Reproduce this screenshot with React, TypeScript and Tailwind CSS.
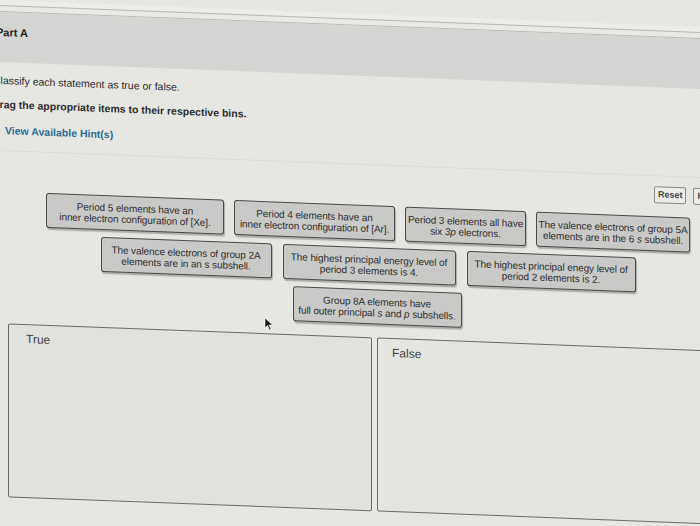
const row1 = [
  { w: "w-[178px]", a: "Period 5 elements have an", b: <>inner electron configuration of [Xe].</> },
  { w: "w-[161px]", a: "Period 4 elements have an", b: <>inner electron configuration of [Ar].</> },
  { w: "w-[121px]", a: "Period 3 elements all have", b: <>six <i>3p</i> electrons.</> },
  { w: "w-[154px]", a: "The valence electrons of group 5A", b: <>elements are in the 6 <i>s</i> subshell.</> },
];

const row2 = [
  { w: "w-[171px]", a: "The valence electrons of group 2A", b: <>elements are in an s subshell.</> },
  { w: "w-[173px]", a: "The highest principal energy level of", b: <>period 3 elements is 4.</> },
  { w: "w-[169px]", a: "The highest principal enegy level of", b: <>period 2 elements is 2.</> },
];

const row3 = [
  { w: "w-[169px]", a: "Group 8A elements have", b: <>full outer principal <i>s</i> and <i>p</i> subshells.</> },
];

type Item = { w: string; a: string; b: React.ReactNode };

function Card({ item }: { item: Item }) {
  return (
    <div
      className={`${item.w} flex h-[35px] shrink-0 flex-col items-center justify-center rounded-[3px] border-[1.5px] border-[#4a4a4a] bg-[#c9c9c7] text-center text-[10px] leading-[11px] tracking-[-0.1px] text-[#2f2f2f] shadow-[1px_2px_1px_rgba(0,0,0,0.25)]`}
    >
      <span className="whitespace-nowrap">{item.a}</span>
      <span className="whitespace-nowrap">{item.b}</span>
    </div>
  );
}

function Row({ items, gap, pad }: { items: Item[]; gap: string; pad?: string }) {
  return (
    <div className={`flex justify-center ${gap} ${pad ?? ""}`}>
      {items.map((it) => (
        <Card key={it.a} item={it} />
      ))}
    </div>
  );
}

export default function App() {
  return (
    <div
      className="relative h-[526px] w-[700px] overflow-hidden bg-[#e6e6e2]"
      style={{ fontFamily: '"Liberation Sans", Arial, sans-serif' }}
    >
      <div className="origin-top-left skew-y-[2.2deg]">
        <div className="h-[5px] bg-[#ececea]" />
        <div className="h-[7px] border-y border-[#b9b9b6] bg-[#e9e9e6]" />
        <div className="h-[50px] bg-[#d5d6d3] pt-[12px]">
          <div className="-ml-[4px] text-[11px] font-bold text-[#222]">Part A</div>
        </div>

        <div className="pt-[11px] text-[10.5px] text-[#2d2d2d]">
          <p className="-ml-[7px]">Classify each statement as true or false.</p>
          <p className="-ml-[8px] mt-[8px] font-bold">Drag the appropriate items to their respective bins.</p>
          <p className="ml-[5px] mt-[10px] font-bold text-[#2e6c94]">View Available Hint(s)</p>
        </div>

        <div className="mt-[12px] h-[2px] border-t border-[#dcdcd8]" />

        <div className="-mr-[21px] flex justify-end gap-[7px] pt-[9px]">
          <div className="flex h-[17px] items-center rounded-[2px] border border-[#8a8a88] bg-[#ececea] px-[3px] text-[9px] font-bold text-[#444]">
            Reset
          </div>
          <div className="flex h-[17px] items-center rounded-[2px] border border-[#8a8a88] bg-[#ececea] px-[3px] text-[9px] font-bold text-[#444]">
            Help
          </div>
        </div>

        <div className="mt-[13px] flex flex-col gap-[7px] pl-[36px]">
          <Row items={row1} gap="gap-[10px]" />
          <Row items={row2} gap="gap-[11px]" />
          <Row items={row3} gap="gap-[10px]" pad="pl-[18px]" />
        </div>

        <div className="mt-[13px] flex gap-[5px] pl-[8px]">
          <div className="h-[174px] w-[364px] shrink-0 rounded-[2px] border-[1.5px] border-[#6a6a6a] bg-[#e1e1de] px-[17px] pt-[5px] text-[12px] text-[#444]">
            True
          </div>
          <div className="h-[174px] w-[340px] shrink-0 rounded-[2px] border-[1.5px] border-[#6a6a6a] bg-[#e4e4e1] px-[14px] pt-[5px] text-[12px] text-[#444]">
            False
          </div>
        </div>
      </div>

      <svg className="absolute left-[264px] top-[317px]" width="10" height="14" viewBox="0 0 10 14">
        <path d="M1 1 L1 11 L3.5 8.5 L5.5 13 L7 12.3 L5 8 L8.5 8 Z" fill="#111" stroke="#fff" strokeWidth="0.6" />
      </svg>
    </div>
  );
}
